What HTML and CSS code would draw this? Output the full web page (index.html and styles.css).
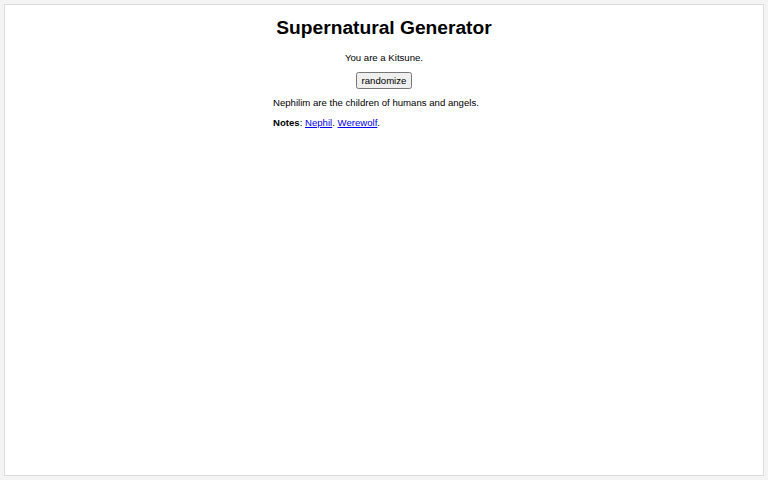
FILE: index.html
```html
<!DOCTYPE html>
<html lang="en">
<head>
    <meta charset="UTF-8">
    <meta name="viewport" content="width=device-width, initial-scale=1.0">
    <title>Supernatural Generator</title>
    <link rel="stylesheet" href="styles.css">
</head>
<body>
    <div class="page">
        <div class="content">
            <h1>Supernatural Generator</h1>
            <p class="result">You are a <span id="creature">Kitsune</span>.</p>
            <div class="controls">
                <button id="randomizeBtn">randomize</button>
            </div>
            <p id="fact">Nephilim are the children of humans and angels.</p>
            <p class="notes"><b>Notes</b>: <a href="#">Nephil</a>. <a href="#">Werewolf</a>.</p>
        </div>
    </div>
</body>
</html>
```

FILE: styles.css
```css
html, body {
    height: 100%;
}
body {
    font-family: "Liberation Sans", Arial, sans-serif;
    margin: 0;
    padding: 4px;
    box-sizing: border-box;
    background-color: #f4f4f4;
    color: #000;
}
.page {
    height: 100%;
    box-sizing: border-box;
    background-color: #fff;
    border: 1px solid #dcdcdc;
    padding-top: 2px;
}
.content {
    width: 222px;
    margin: 0 auto;
    font-size: 9.6px;
}
h1 {
    font-size: 19.2px;
    line-height: 22px;
    margin: 10px 0 12.5px;
    text-align: center;
    white-space: nowrap;
}
.result {
    text-align: center;
    margin: 0 0 9.5px;
}
.controls {
    text-align: center;
    margin-bottom: 7.5px;
}
button {
    font-family: inherit;
    font-size: 9.6px;
    padding: 1px 4px;
}
p {
    margin: 0 0 9.6px;
}
a {
    color: #0000ee;
}
```
